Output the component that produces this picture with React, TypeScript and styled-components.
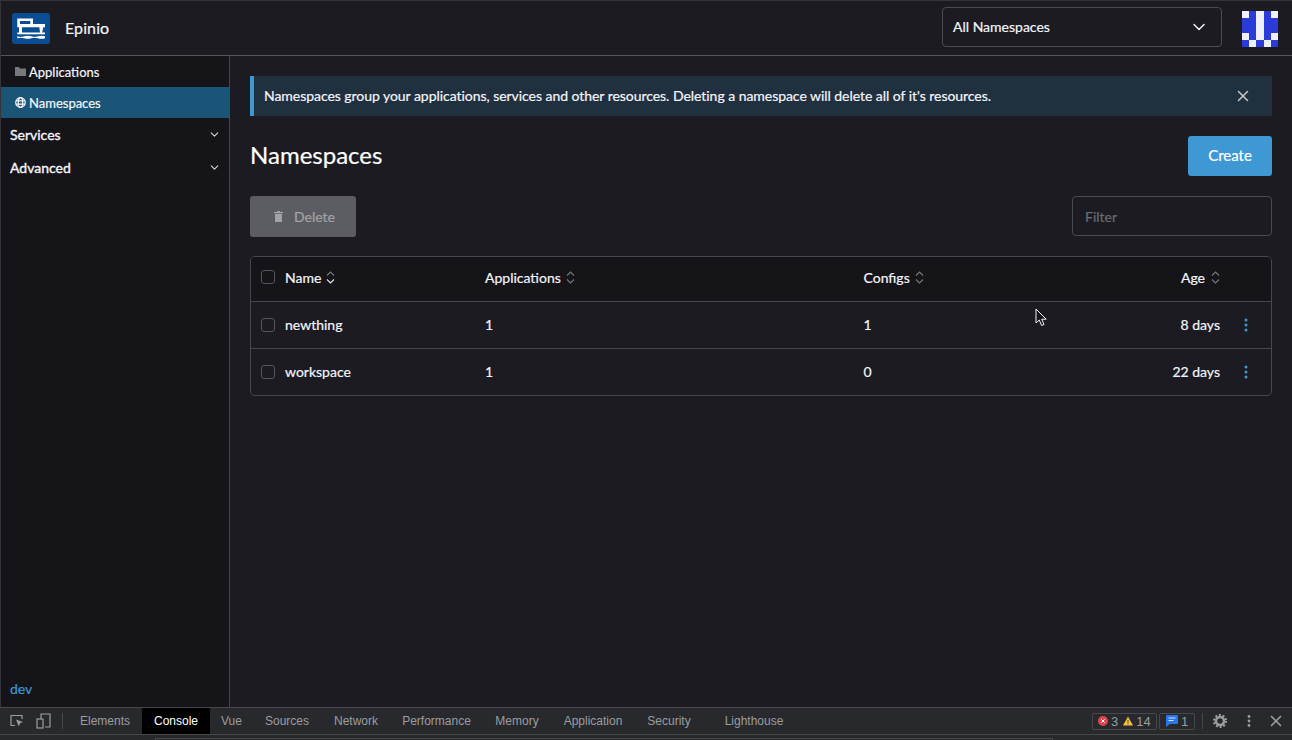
import React from 'react';
import styled, { createGlobalStyle } from 'styled-components';
import { ChevronDown, X } from 'lucide-react';

const Global = createGlobalStyle`
  html, body { margin: 0; padding: 0; background: #1b1b21; }
  body { font-family: Lato, "Liberation Sans", sans-serif; color: #fff; overflow: hidden; -webkit-text-stroke: 0.2px; }
  * { box-sizing: border-box; }
`;

const Page = styled.div`
  position: relative; width: 1292px; height: 740px; display: flex; flex-direction: column;
  background: #1b1b21; border-left: 1px solid #33343a; border-top: 1px solid #33343a;
`;
const Cursor = styled.svg`position: absolute; left: 1034px; top: 307px; width: 12px; height: 19px;`;
const Header = styled.header`
  height: 55px; flex: none; display: flex; align-items: center;
  border-bottom: 1px solid #55565b; padding: 0 14px 0 11px; background: #1b1b21;
`;
const Logo = styled.svg`width: 38px; height: 31px; flex: none;`;
const Brand = styled.div`font-size: 16px; margin: -2px 0 0 15px; flex: 1; color: #f4f5fa; letter-spacing: 0.1px;`;
const NsSelect = styled.div`
  width: 280px; height: 40px; border: 1px solid #4a4b50; border-radius: 4px; margin-top: -2px;
  display: flex; align-items: center; justify-content: space-between; padding: 0 12px 2px 10px;
  font-size: 14px; color: #f4f5fa;
`;
const SelectChevron = styled(ChevronDown)`margin-top: 2px;`;
const Avatar = styled.svg`width: 36px; height: 36px; margin: 2px 0 0 20px; flex: none; display: block;`;
const Body = styled.div`flex: 1; display: flex; min-height: 0;`;
const Side = styled.nav`
  width: 229px; flex: none; background: #141419; border-right: 1px solid #47484d;
  display: flex; flex-direction: column;
`;
const SideItem = styled.div<{ $active?: boolean }>`
  height: 31px; display: flex; align-items: center; gap: 3px; padding-left: 14px; font-size: 13px;
  color: #f4f5fa; background: ${p => (p.$active ? '#1a5476' : 'transparent')};
`;
const SideGroup = styled.div`
  height: 33px; display: flex; align-items: center; justify-content: space-between;
  padding: 0 8px 0 9px; font-size: 14px; color: #f4f5fa; -webkit-text-stroke: 0.35px;
`;
const SideSpacer = styled.div`flex: 1;`;
const Version = styled.div`height: 36px; padding: 9px 9px 0; font-size: 14px; color: #3d98d3;`;
const Main = styled.main`flex: 1; padding: 20px 20px 0 20px; min-width: 0;`;
const Banner = styled.div`
  height: 40px; background: #21303f; border-left: 4px solid #3d98d3; padding: 0 20px 1px 10px;
  display: flex; align-items: center; justify-content: space-between; font-size: 14px; color: #f4f5fa;
  letter-spacing: -0.043px;
`;
const TitleRow = styled.div`height: 40px; margin-top: 20px; display: flex; align-items: center; justify-content: space-between;`;
const Title = styled.h1`margin: 0; padding-bottom: 4px; font-size: 24px; font-weight: 400; color: #fff;`;
const Create = styled.button`
  width: 84px; height: 40px; border: 0; border-radius: 3px; background: #3d98d3; color: #fff;
  font: 15px Lato, sans-serif; padding: 0 0 2px;
`;
const Tools = styled.div`height: 41px; margin-top: 20px; display: flex; justify-content: space-between;`;
const DeleteBtn = styled.button`
  width: 106px; height: 41px; border: 0; border-radius: 3px; background: #5c5d62; color: #a3a3a6;
  font: 14px Lato, sans-serif; display: flex; align-items: center; gap: 11px; padding: 0 0 0 24px;
`;
const FilterBox = styled.div`
  width: 200px; height: 40px; border: 1px solid #4a4b50; border-radius: 4px; padding: 0 12px;
  display: flex; align-items: center; font-size: 14px; color: #6a6b70;
`;
const Table = styled.div`
  margin-top: 19px; border: 1px solid #47484d; border-radius: 5px; overflow: hidden;
`;
const Row = styled.div<{ $head?: boolean }>`
  height: ${p => (p.$head ? 44 : 47)}px; display: grid; grid-template-columns: 34px 200px 378.5px 1fr 100px 51px;
  align-items: center; font-size: 14px; color: #f4f5fa; padding-bottom: ${p => (p.$head ? 4 : 2)}px;
  background: ${p => (p.$head ? '#141419' : 'transparent')};
  ${p => (p.$head ? '' : 'border-top: 1px solid #47484d;')}
`;
const CheckCell = styled.div`padding-left: 10px; display: flex;`;
const Check = styled.span<{ $head?: boolean }>`
  width: 14px; height: 14px; border: 1px solid #55565b; border-radius: 3px; display: block;
  margin-top: ${p => (p.$head ? -1 : 1)}px;
`;
const HeadLabel = styled.div`display: flex; align-items: center; gap: 5px;`;
const AgeHead = styled(HeadLabel)`justify-content: flex-end; gap: 6px;`;
const AgeCell = styled.div`display: flex; justify-content: flex-end; white-space: nowrap;`;
const Actions = styled.div`display: flex; justify-content: center; align-items: center; padding-left: 1px;`;
const Dots = styled.svg`width: 4px; height: 14px; display: block; margin-top: 1px;`;

const DevTools = styled.footer`
  height: 33px; flex: none; background: #28292c; border-top: 1px solid #47484b; display: flex; flex-direction: column;
  margin-left: -1px; -webkit-text-stroke: 0;
`;
const DevBar = styled.div`
  height: 27px; flex: none; display: flex; align-items: center; font-family: "Liberation Sans", sans-serif;
  font-size: 12px; color: #9b9da0; border-bottom: 1px solid #47484b; padding-left: 9px;
`;
const DevIcon = styled.svg`width: 16px; height: 16px; flex: none; margin-right: 11px; display: block;`;
const DevSep = styled.span`width: 1px; height: 16px; background: #47484b; margin: 0 5px 0 -1px; flex: none;`;
const Tab = styled.div<{ $active?: boolean; $w: number }>`
  width: ${p => p.$w}px; height: 26px; flex: none; display: flex; align-items: center; justify-content: center;
  ${p => (p.$active ? 'background: #000; color: #fff;' : '')}
`;
const DevRight = styled.div`margin-left: auto; display: flex; align-items: center; padding-right: 7px;`;
const Badge = styled.div<{ $w: number; $pl: number }>`
  width: ${p => p.$w}px; height: 17px; border: 1px solid #47484b; border-radius: 2px; padding-left: ${p => p.$pl}px;
  margin-right: 2px; display: flex; align-items: center; gap: 3px; color: #9b9da0; font-size: 13px;
`;
const BarSep = styled.span`width: 1px; height: 16px; background: #47484b; margin: 0 10px 0 5px; flex: none;`;
const WarnIcon = styled.svg`width: 10px; height: 10px; margin-left: 2px; flex: none;`;
const GearIcon = styled.svg`width: 14px; height: 14px; margin-right: 20px; flex: none;`;
const MoreIcon = styled.svg`width: 4px; height: 12px; margin-right: 16px; flex: none;`;
const DevStrip = styled.div`flex: 1; padding: 3px 0 0 155px; background: #28292c;`;
const DevStripInner = styled.div`width: 898px; height: 100%; border: 1px solid #47484b; border-bottom: 0;`;
const SortIcon = styled.svg`width: 9px; height: 13px; flex: none;`;

const rows = [
  { name: 'newthing', apps: '1', cfg: '1', age: '8 days' },
  { name: 'workspace', apps: '1', cfg: '0', age: '22 days' },
];

const Sort: React.FC<{ active?: boolean }> = ({ active }) => (
  <SortIcon viewBox="0 0 9 13" fill="none">
    <path d="M1 4.5 4.5 1 8 4.5" stroke="#77787c" strokeWidth="1.1" />
    <path d="M1 8.5 4.5 12 8 8.5" stroke={active ? '#e8e8ea' : '#77787c'} strokeWidth="1.1" />
  </SortIcon>
);

const pattern = ['10101', '00100', '00100', '10101', '01010'];

export default function App() {
  return (
    <Page>
      <Global />
      <Header>
        <Logo viewBox="0 0 38 31">
          <rect width="38" height="31" rx="3" fill="#0b4d92" />
          <path d="M5.300 5.500H21v2.500H5.300zM5.300 5.500h2.700v6H5.300zM18.300 5.500H21v6h-2.700zM5.300 11h27.700v3.200H5.300zM7 14h3v6H7zM27.300 14h4l-1.200 6h-2z" fill="#fff" />
          <path d="M5.300 19.500h27.700v1.800H5.300z" fill="#fff" />
          <path d="M5.300 23.300q3.400 1 6.900 0t6.900 0 6.900 0 7 0v1.900q-3.500 1-7 0t-6.900 0-6.900 0-6.900 0z" fill="#fff" />
        </Logo>
        <Brand>Epinio</Brand>
        <NsSelect>All Namespaces<SelectChevron size={20} strokeWidth={1.7} color="#f4f5fa" /></NsSelect>
        <Avatar viewBox="0 0 5 5" shapeRendering="crispEdges">
          <rect width="5" height="5" fill="#2a3bd8" />
          {pattern.map((r, y) => r.split('').map((c, x) => c === '1' ? <rect key={`${x}-${y}`} x={x} y={y} width="1" height="1" fill="#eef0fb" /> : null))}
        </Avatar>
      </Header>
      <Body>
        <Side>
          <SideItem>
            <svg width="11" height="9" viewBox="0 0 11 9"><path d="M0 0h4l1 1.500h6V9H0z" fill="#77787c" /></svg>
            Applications
          </SideItem>
          <SideItem $active>
            <svg width="11" height="11" viewBox="0 0 11 11" fill="none" stroke="#f4f5fa" strokeWidth="1.200"><circle cx="5.500" cy="5.500" r="4.800" /><ellipse cx="5.500" cy="5.500" rx="2.200" ry="4.800" /><path d="M1 3.800h9M1 7.200h9" /></svg>
            Namespaces
          </SideItem>
          <SideGroup>Services<ChevronDown size={13} strokeWidth={2.2} color="#d0d0d3" /></SideGroup>
          <SideGroup>Advanced<ChevronDown size={13} strokeWidth={2.2} color="#d0d0d3" /></SideGroup>
          <SideSpacer />
          <Version>dev</Version>
        </Side>
        <Main>
          <Banner>
            Namespaces group your applications, services and other resources. Deleting a namespace will delete all of it's resources.
            <X size={18} strokeWidth={2} color="#c4c6ca" />
          </Banner>
          <TitleRow><Title>Namespaces</Title><Create>Create</Create></TitleRow>
          <Tools>
            <DeleteBtn>
              <svg width="9" height="11" viewBox="0 0 9 11"><path d="M3 0h3v1h3v1.300H0V1h3zM1 3h7v8H1z" fill="#a3a3a6" /></svg>
              Delete
            </DeleteBtn>
            <FilterBox>Filter</FilterBox>
          </Tools>
          <Table>
            <Row $head>
              <CheckCell><Check $head /></CheckCell>
              <HeadLabel>Name <Sort active /></HeadLabel>
              <HeadLabel>Applications <Sort /></HeadLabel>
              <HeadLabel>Configs <Sort /></HeadLabel>
              <AgeHead>Age <Sort /></AgeHead>
            </Row>
            {rows.map(r => (
              <Row key={r.name}>
                <CheckCell><Check /></CheckCell>
                <div>{r.name}</div>
                <div>{r.apps}</div>
                <div>{r.cfg}</div>
                <AgeCell>{r.age}</AgeCell>
                <Actions>
                  <Dots viewBox="0 0 4 14"><circle cx="2" cy="2" r="1.500" fill="#3d98d3" /><circle cx="2" cy="7" r="1.500" fill="#3d98d3" /><circle cx="2" cy="12" r="1.500" fill="#3d98d3" /></Dots>
                </Actions>
              </Row>
            ))}
          </Table>
        </Main>
      </Body>
      <DevTools>
        <DevBar>
          <DevIcon viewBox="0 0 16 16" fill="none" stroke="#9b9da0" strokeWidth="1.200"><path d="M13 6V2.500H2v10h4" /><path d="M7 6.500l7 2.500-3 1.300L9.800 13.500z" fill="#9b9da0" stroke="none" /></DevIcon>
          <DevIcon viewBox="0 0 16 16" fill="none" stroke="#9b9da0" strokeWidth="1.200"><path d="M5 6V1h9v13H9" /><rect x="1" y="6" width="6" height="9" /></DevIcon>
          <DevSep />
          <Tab $w={74}>Elements</Tab>
          <Tab $w={68} $active>Console</Tab>
          <Tab $w={43}>Vue</Tab>
          <Tab $w={68}>Sources</Tab>
          <Tab $w={70}>Network</Tab>
          <Tab $w={91}>Performance</Tab>
          <Tab $w={70}>Memory</Tab>
          <Tab $w={82}>Application</Tab>
          <Tab $w={70}>Security</Tab>
          <Tab $w={100}>Lighthouse</Tab>
          <DevRight>
            <Badge $w={65} $pl={5}>
              <svg width="10" height="10" viewBox="0 0 10 10"><circle cx="5" cy="5" r="5" fill="#e0434b" /><path d="M3.300 3.300l3.400 3.400M6.700 3.300 3.300 6.700" stroke="#fff" /></svg>
              3
              <WarnIcon viewBox="0 0 11 10"><path d="M5.500 0 11 10H0z" fill="#f5c33b" /><path d="M5 3.500h1V7H5zM5 7.800h1v1H5z" fill="#333" /></WarnIcon>
              14
            </Badge>
            <Badge $w={36} $pl={6}>
              <svg width="12" height="12" viewBox="0 0 12 12"><path d="M1 0h10a1 1 0 0 1 1 1v7a1 1 0 0 1-1 1H4l-4 3V1a1 1 0 0 1 1-1z" fill="#2a76e8" /><path d="M2.500 3h7M2.500 5.500h5" stroke="#cfe0fb" /></svg>
              1
            </Badge>
            <BarSep />
            <GearIcon viewBox="0 0 14 14"><circle cx="7" cy="7" r="4" fill="none" stroke="#9b9da0" strokeWidth="2.500" /><circle cx="7" cy="7" r="6" fill="none" stroke="#9b9da0" strokeWidth="2" strokeDasharray="2 1.770" /></GearIcon>
            <MoreIcon viewBox="0 0 4 12"><circle cx="2" cy="1.500" r="1.400" fill="#9b9da0" /><circle cx="2" cy="6" r="1.400" fill="#9b9da0" /><circle cx="2" cy="10.500" r="1.400" fill="#9b9da0" /></MoreIcon>
            <X size={18} strokeWidth={2.2} color="#9b9da0" />
          </DevRight>
        </DevBar>
        <DevStrip><DevStripInner /></DevStrip>
      </DevTools>
      <Cursor viewBox="0 0 12 19"><path d="M1 1v14l3.300-3 2.300 5.500 2.400-1-2.300-5.300h4.500z" fill="#15151a" stroke="#f4f5fa" strokeWidth="1" /></Cursor>
    </Page>
  );
}
